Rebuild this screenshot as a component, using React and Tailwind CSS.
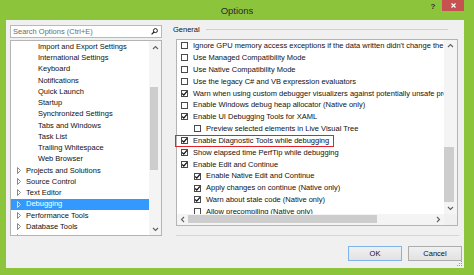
import React from "react";

const treeItems = [
  { label: "Import and Export Settings" },
  { label: "International Settings" },
  { label: "Keyboard" },
  { label: "Notifications" },
  { label: "Quick Launch" },
  { label: "Startup" },
  { label: "Synchronized Settings" },
  { label: "Tabs and Windows" },
  { label: "Task List" },
  { label: "Trailing Whitespace" },
  { label: "Web Browser" },
  { label: "Projects and Solutions", parent: true },
  { label: "Source Control", parent: true },
  { label: "Text Editor", parent: true },
  { label: "Debugging", parent: true, selected: true },
  { label: "Performance Tools", parent: true },
  { label: "Database Tools", parent: true },
  { label: "Graphics Diagnostics", parent: true },
];

const options = [
  { label: "Ignore GPU memory access exceptions if the data written didn't change the value" },
  { label: "Use Managed Compatibility Mode" },
  { label: "Use Native Compatibility Mode" },
  { label: "Use the legacy C# and VB expression evaluators" },
  { label: "Warn when using custom debugger visualizers against potentially unsafe processes", on: true },
  { label: "Enable Windows debug heap allocator (Native only)" },
  { label: "Enable UI Debugging Tools for XAML", on: true },
  { label: "Preview selected elements in Live Visual Tree", indent: true },
  { label: "Enable Diagnostic Tools while debugging", on: true },
  { label: "Show elapsed time PerfTip while debugging", on: true },
  { label: "Enable Edit and Continue", on: true },
  { label: "Enable Native Edit and Continue", on: true, indent: true },
  { label: "Apply changes on continue (Native only)", on: true, indent: true },
  { label: "Warn about stale code (Native only)", on: true, indent: true },
  { label: "Allow precompiling (Native only)", indent: true },
];

// small scroll arrows
function Arrow({ d, w = 7, h = 5 }) {
  return (
    <svg width={w} height={h} viewBox={`0 0 ${w} ${h}`} className="block">
      <path d={d} fill="none" stroke="#606060" strokeWidth="1.1" />
    </svg>
  );
}

function Expander({ light }) {
  return (
    <svg width="4" height="7" viewBox="0 0 4 7" className="block shrink-0">
      <path d="M0.5 0.5L3.5 3.5L0.5 6.5Z" fill="none" stroke={light ? "#d8e9ff" : "#7a7a7a"} strokeWidth="0.9" />
    </svg>
  );
}

function Check({ on }) {
  return (
    <span className="flex h-[7px] w-[7px] shrink-0 items-center justify-center border border-[#4a4a4a] bg-white">
      {on && (
        <svg width="5" height="5" viewBox="0 0 5 5" className="block overflow-visible">
          <path d="M0.2 2.5L1.8 4.1L4.9 0.4" fill="none" stroke="#111" strokeWidth="1.3" />
        </svg>
      )}
    </span>
  );
}

function LeftColumn() {
  return (
    <div className="ml-[4px] mt-[5px] w-[152px] shrink-0">
      {/* search */}
      <div className="flex h-[13px] items-center justify-between border border-[#b9b9b9] bg-white pl-[2px] pr-[3px] text-[#6d6d6d]">
        <span>Search Options (Ctrl+E)</span>
        <svg width="7" height="7" viewBox="0 0 7 7" className="block">
          <circle cx="4.4" cy="2.6" r="2" fill="none" stroke="#1e1e1e" strokeWidth="1" />
          <path d="M3 4L0.6 6.4" stroke="#1e1e1e" strokeWidth="1.2" />
        </svg>
      </div>

      {/* tree */}
      <div className="mt-[2px] flex h-[196px] border border-[#b4b4b4] bg-white">
        <div className="flex-1 overflow-hidden">
          {treeItems.map((item) => (
            <div
              key={item.label}
              className={`flex h-[11.25px] items-center whitespace-nowrap ${
                item.parent ? "gap-[5px] pl-[6px]" : "pl-[27px]"
              } ${item.selected ? "bg-[#3399ff] text-white" : ""}`}
            >
              {item.parent && <Expander light={item.selected} />}
              <span>{item.label}</span>
            </div>
          ))}
        </div>
        <div className="flex w-[12px] flex-col bg-[#f4f4f4]">
          <div className="flex h-[12px] items-center justify-center">
            <Arrow d="M1 4L3.5 1.5L6 4" />
          </div>
          <div className="ml-[1px] mt-[34px] h-[83px] w-[8px] bg-[#cdcdcd]" />
          <div className="flex-1" />
          <div className="flex h-[12px] items-center justify-center">
            <Arrow d="M1 1L3.5 3.5L6 1" />
          </div>
        </div>
      </div>
    </div>
  );
}

function RightColumn() {
  return (
    <div className="ml-[10px] flex w-[287px] flex-col">
      {/* group header */}
      <div className="flex h-[19px] items-center">
        <span className="pl-[1px]">General</span>
        <div className="ml-[6px] mr-[11px] h-[1px] flex-1 bg-[#cfcfcf]" />
      </div>

      {/* options panel */}
      <div className="relative ml-[4px] flex h-[187px] w-[282px] flex-col border border-[#b4b4b4] bg-white">
        <div className="flex h-[174px]">
          <div className="flex-1 overflow-hidden">
            {options.map((o) => (
              <div
                key={o.label}
                className={`flex h-[11.85px] items-center gap-[5px] whitespace-nowrap ${
                  o.indent ? "pl-[17px]" : "pl-[4px]"
                }`}
              >
                <Check on={o.on} />
                <span>{o.label}</span>
              </div>
            ))}
          </div>
          <div className="flex w-[13px] flex-col bg-[#f4f4f4]">
            <div className="flex h-[11px] items-center justify-center">
              <Arrow d="M1 4L3.5 1.5L6 4" />
            </div>
            <div className="mt-[96px] h-[55px] w-[10px] bg-[#cdcdcd]" />
            <div className="flex-1" />
            <div className="flex h-[11px] items-center justify-center">
              <Arrow d="M1 1L3.5 3.5L6 1" />
            </div>
          </div>
        </div>
        {/* horizontal scrollbar */}
        <div className="flex h-[11px] bg-[#f4f4f4]">
          <div className="flex w-[11px] items-center justify-center">
            <Arrow d="M4 1L1.5 3.5L4 6" w={5} h={7} />
          </div>
          <div className="mt-[1px] h-[8px] w-[189px] bg-[#cdcdcd]" />
          <div className="flex-1" />
          <div className="flex w-[12px] items-center justify-center">
            <Arrow d="M1 1L3.5 3.5L1 6" w={5} h={7} />
          </div>
          <div className="w-[13px] bg-[#f0f0f0]" />
        </div>

        {/* highlight annotation */}
        <div className="pointer-events-none absolute left-[-2px] top-[95px] h-[12px] w-[159px] border border-[#e2212b]" />
      </div>

      <div className="ml-[4px] mt-[9px] h-[1px] w-[283px] bg-[#d6d6d6]" />
    </div>
  );
}

export default function App() {
  return (
    <div className="flex h-[275px] w-[474px] flex-col overflow-hidden bg-[#8cc43c] font-['Liberation_Sans',Arial,sans-serif] text-[7.5px] leading-none text-[#111111]">
      {/* title bar */}
      <div className="grid h-[20px] shrink-0 grid-cols-[1fr_auto_1fr]">
        <div />
        <div className="flex items-center pt-[1px] text-[9.5px] text-[#2a2a2a]">Options</div>
        <div className="flex items-start justify-end pr-[10px]">
          <span className="mr-[4px] mt-[2px] w-[10px] text-center text-[8px] font-bold leading-[9px] text-[#333]">?</span>
          <span className="flex h-[11px] w-[22px] items-center justify-center bg-[#c75050]">
            <svg width="5" height="5" viewBox="0 0 5 5" className="block">
              <path d="M0.5 0.5L4.5 4.5M4.5 0.5L0.5 4.5" stroke="#fff" strokeWidth="1.2" />
            </svg>
          </span>
        </div>
      </div>

      {/* client area */}
      <div className="relative ml-[6px] mr-[10px] flex h-[248px] shrink-0 flex-col bg-[#f0f0f0]">
        <div className="flex items-start">
          <LeftColumn />
          <RightColumn />
        </div>

        <div className="mt-[10px] flex justify-end gap-[6px] pr-[2px]">
          <button className="flex h-[15px] w-[54px] items-center justify-center border border-[#7eb4ea] bg-gradient-to-b from-[#f0f0f0] to-[#e2e2e2] text-[#111111]">
            OK
          </button>
          <button className="flex h-[15px] w-[54px] items-center justify-center border border-[#acacac] bg-gradient-to-b from-[#f0f0f0] to-[#e2e2e2] text-[#111111]">
            Cancel
          </button>
        </div>

        {/* resize grip */}
        <svg width="6" height="6" viewBox="0 0 6 6" className="absolute bottom-[1px] right-[1px] block">
          <rect x="4" y="0" width="1" height="1" fill="#9a9a9a" />
          <rect x="2" y="2" width="1" height="1" fill="#9a9a9a" />
          <rect x="4" y="2" width="1" height="1" fill="#9a9a9a" />
          <rect x="0" y="4" width="1" height="1" fill="#9a9a9a" />
          <rect x="2" y="4" width="1" height="1" fill="#9a9a9a" />
          <rect x="4" y="4" width="1" height="1" fill="#9a9a9a" />
        </svg>
      </div>
    </div>
  );
}
